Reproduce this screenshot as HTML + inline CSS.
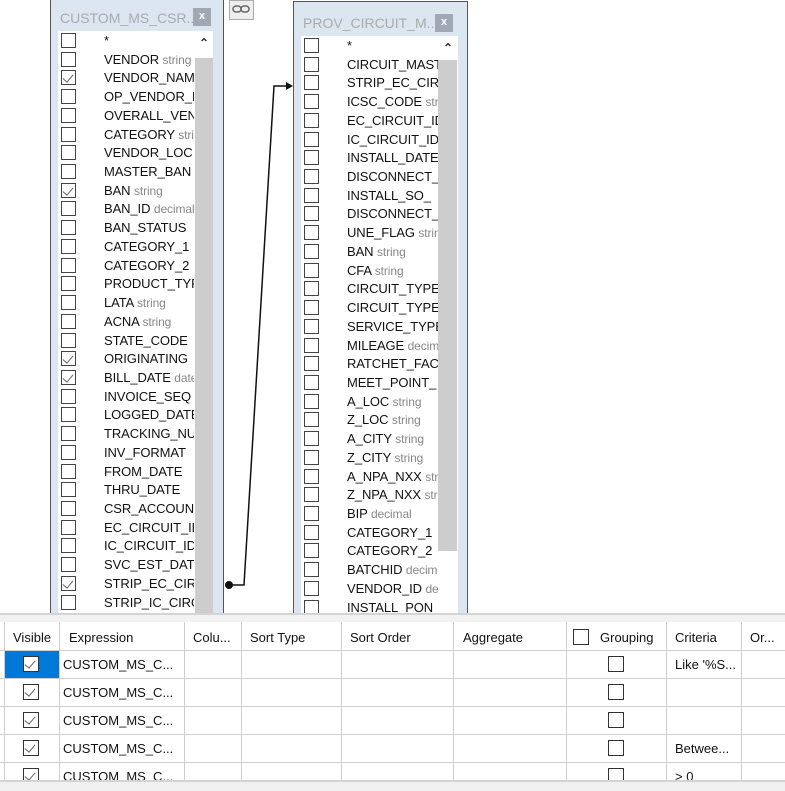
<!DOCTYPE html>
<html><head><style>
*{margin:0;padding:0;box-sizing:border-box}
body{width:785px;height:791px;overflow:hidden;background:#fff;font-family:"Liberation Sans",sans-serif;font-size:13px;color:#111;position:relative}
.panel{position:absolute;background:#dce6f1;border-left:1px solid #555;border-right:1px solid #555}
.title{position:absolute;color:#aaa;font-size:14px;white-space:nowrap}
.close{position:absolute;width:18px;height:18px;background:#9fa8b3;color:#fff;font-size:11px;font-weight:bold;text-align:center;line-height:17px}
.list{position:absolute;background:#fff;overflow:hidden}
.row{height:18.72px;position:relative;white-space:nowrap}
.cb{position:absolute;left:3px;top:2px;width:15px;height:15px;border:1px solid #444;background:#fff}
.ck::after{content:"";position:absolute;left:3px;top:1px;width:5px;height:9px;border-right:1.5px solid #666;border-bottom:1.5px solid #666;transform:rotate(40deg)}
.tx{position:absolute;left:46px;top:2px;letter-spacing:-0.1px}
.t{color:#888;font-size:12px}
.thumb{position:absolute;background:#cdcdcd}
.gl{position:absolute;background:#cfcfcf}
.h{position:absolute;top:630px;white-space:nowrap}
.c{position:absolute;white-space:nowrap}
.gcb{position:absolute;width:16px;height:16px;border:1px solid #333;background:#fff}
</style></head><body>

<div class="panel" style="left:50px;top:0;width:174px;height:614px"></div>
<div class="title" style="left:60px;top:10px">CUSTOM_MS_CSR...</div>
<div class="close" style="left:193px;top:8px">x</div>
<div class="list" style="left:58px;top:31px;width:155px;height:583px">
<div style="position:absolute;top:0;left:0;width:136px;height:583px;overflow:hidden">
<div class="row"><div class="cb"></div><div class="tx">*</div></div>
<div class="row"><div class="cb"></div><div class="tx">VENDOR <span class="t">string</span></div></div>
<div class="row"><div class="cb ck"></div><div class="tx">VENDOR_NAME</div></div>
<div class="row"><div class="cb"></div><div class="tx">OP_VENDOR_ID</div></div>
<div class="row"><div class="cb"></div><div class="tx">OVERALL_VENDOR</div></div>
<div class="row"><div class="cb"></div><div class="tx">CATEGORY <span class="t">string</span></div></div>
<div class="row"><div class="cb"></div><div class="tx">VENDOR_LOC</div></div>
<div class="row"><div class="cb"></div><div class="tx">MASTER_BAN</div></div>
<div class="row"><div class="cb ck"></div><div class="tx">BAN <span class="t">string</span></div></div>
<div class="row"><div class="cb"></div><div class="tx">BAN_ID <span class="t">decimal</span></div></div>
<div class="row"><div class="cb"></div><div class="tx">BAN_STATUS</div></div>
<div class="row"><div class="cb"></div><div class="tx">CATEGORY_1</div></div>
<div class="row"><div class="cb"></div><div class="tx">CATEGORY_2</div></div>
<div class="row"><div class="cb"></div><div class="tx">PRODUCT_TYPE</div></div>
<div class="row"><div class="cb"></div><div class="tx">LATA <span class="t">string</span></div></div>
<div class="row"><div class="cb"></div><div class="tx">ACNA <span class="t">string</span></div></div>
<div class="row"><div class="cb"></div><div class="tx">STATE_CODE</div></div>
<div class="row"><div class="cb ck"></div><div class="tx">ORIGINATING</div></div>
<div class="row"><div class="cb ck"></div><div class="tx">BILL_DATE <span class="t">date</span></div></div>
<div class="row"><div class="cb"></div><div class="tx">INVOICE_SEQ</div></div>
<div class="row"><div class="cb"></div><div class="tx">LOGGED_DATE</div></div>
<div class="row"><div class="cb"></div><div class="tx">TRACKING_NUM</div></div>
<div class="row"><div class="cb"></div><div class="tx">INV_FORMAT</div></div>
<div class="row"><div class="cb"></div><div class="tx">FROM_DATE</div></div>
<div class="row"><div class="cb"></div><div class="tx">THRU_DATE</div></div>
<div class="row"><div class="cb"></div><div class="tx">CSR_ACCOUNT</div></div>
<div class="row"><div class="cb"></div><div class="tx">EC_CIRCUIT_ID</div></div>
<div class="row"><div class="cb"></div><div class="tx">IC_CIRCUIT_ID</div></div>
<div class="row"><div class="cb"></div><div class="tx">SVC_EST_DATE</div></div>
<div class="row"><div class="cb ck"></div><div class="tx">STRIP_EC_CIRCUIT</div></div>
<div class="row"><div class="cb"></div><div class="tx">STRIP_IC_CIRCUIT</div></div>
</div>
<div class="thumb" style="left:137px;top:27px;width:18px;height:560px"></div>
<div style="position:absolute;left:141px;top:5px;font-size:12px;color:#333;font-weight:bold">&#8963;</div>
</div>

<div style="position:absolute;left:229px;top:0;width:25px;height:20px;border:1px solid #aaa;background:#eee"></div>
<svg style="position:absolute;left:231px;top:2px" width="20" height="14"><rect x="2" y="4" width="8" height="6" rx="3" fill="none" stroke="#666" stroke-width="1.5"/><rect x="10" y="4" width="8" height="6" rx="3" fill="none" stroke="#666" stroke-width="1.5"/></svg>

<div class="panel" style="left:293px;top:1px;width:175px;height:613px;border-top:1px solid #555"></div>
<div class="title" style="left:303px;top:15px">PROV_CIRCUIT_M...</div>
<div class="close" style="left:435px;top:14px">x</div>
<div class="list" style="left:301px;top:36px;width:157px;height:578px">
<div style="position:absolute;top:0;left:0;width:137px;height:578px;overflow:hidden">
<div class="row"><div class="cb"></div><div class="tx">*</div></div>
<div class="row"><div class="cb"></div><div class="tx">CIRCUIT_MASTER</div></div>
<div class="row"><div class="cb"></div><div class="tx">STRIP_EC_CIRCUIT</div></div>
<div class="row"><div class="cb"></div><div class="tx">ICSC_CODE <span class="t">string</span></div></div>
<div class="row"><div class="cb"></div><div class="tx">EC_CIRCUIT_ID</div></div>
<div class="row"><div class="cb"></div><div class="tx">IC_CIRCUIT_ID</div></div>
<div class="row"><div class="cb"></div><div class="tx">INSTALL_DATE</div></div>
<div class="row"><div class="cb"></div><div class="tx">DISCONNECT_</div></div>
<div class="row"><div class="cb"></div><div class="tx">INSTALL_SO_</div></div>
<div class="row"><div class="cb"></div><div class="tx">DISCONNECT_</div></div>
<div class="row"><div class="cb"></div><div class="tx">UNE_FLAG <span class="t">string</span></div></div>
<div class="row"><div class="cb"></div><div class="tx">BAN <span class="t">string</span></div></div>
<div class="row"><div class="cb"></div><div class="tx">CFA <span class="t">string</span></div></div>
<div class="row"><div class="cb"></div><div class="tx">CIRCUIT_TYPE</div></div>
<div class="row"><div class="cb"></div><div class="tx">CIRCUIT_TYPE</div></div>
<div class="row"><div class="cb"></div><div class="tx">SERVICE_TYPE</div></div>
<div class="row"><div class="cb"></div><div class="tx">MILEAGE <span class="t">decimal</span></div></div>
<div class="row"><div class="cb"></div><div class="tx">RATCHET_FAC</div></div>
<div class="row"><div class="cb"></div><div class="tx">MEET_POINT_</div></div>
<div class="row"><div class="cb"></div><div class="tx">A_LOC <span class="t">string</span></div></div>
<div class="row"><div class="cb"></div><div class="tx">Z_LOC <span class="t">string</span></div></div>
<div class="row"><div class="cb"></div><div class="tx">A_CITY <span class="t">string</span></div></div>
<div class="row"><div class="cb"></div><div class="tx">Z_CITY <span class="t">string</span></div></div>
<div class="row"><div class="cb"></div><div class="tx">A_NPA_NXX <span class="t">string</span></div></div>
<div class="row"><div class="cb"></div><div class="tx">Z_NPA_NXX <span class="t">string</span></div></div>
<div class="row"><div class="cb"></div><div class="tx">BIP <span class="t">decimal</span></div></div>
<div class="row"><div class="cb"></div><div class="tx">CATEGORY_1</div></div>
<div class="row"><div class="cb"></div><div class="tx">CATEGORY_2</div></div>
<div class="row"><div class="cb"></div><div class="tx">BATCHID <span class="t">decimal</span></div></div>
<div class="row"><div class="cb"></div><div class="tx">VENDOR_ID <span class="t">decimal</span></div></div>
<div class="row"><div class="cb"></div><div class="tx">INSTALL_PON</div></div>
</div>
<div class="thumb" style="left:137px;top:24px;width:19px;height:491px"></div>
<div style="position:absolute;left:142px;top:5px;font-size:12px;color:#333;font-weight:bold">&#8963;</div>
</div>

<svg style="position:absolute;left:0;top:0" width="300" height="620">
<polyline points="229,585 244,585 274,86 290,86" fill="none" stroke="#111" stroke-width="1.5"/>
<circle cx="229" cy="585" r="4" fill="#111"/>
<polygon points="293,86 286,82 286,90" fill="#111"/>
</svg>

<div style="position:absolute;left:0;top:613px;width:785px;height:9px;background:#f2f2f2;border-top:2px solid #d4d4d4"></div>

<div style="position:absolute;left:0;top:622px;width:785px;height:158px;background:#fff"></div>
<div class="gl" style="left:0;top:650px;width:785px;height:1px"></div>
<div class="gl" style="left:0;top:678px;width:785px;height:1px"></div>
<div class="gl" style="left:0;top:706px;width:785px;height:1px"></div>
<div class="gl" style="left:0;top:734px;width:785px;height:1px"></div>
<div class="gl" style="left:0;top:762px;width:785px;height:1px"></div>
<div class="gl" style="left:4px;top:622px;width:1px;height:158px"></div>
<div class="gl" style="left:59px;top:622px;width:1px;height:158px"></div>
<div class="gl" style="left:184px;top:622px;width:1px;height:158px"></div>
<div class="gl" style="left:241px;top:622px;width:1px;height:158px"></div>
<div class="gl" style="left:341px;top:622px;width:1px;height:158px"></div>
<div class="gl" style="left:453px;top:622px;width:1px;height:158px"></div>
<div class="gl" style="left:566px;top:622px;width:1px;height:158px"></div>
<div class="gl" style="left:666px;top:622px;width:1px;height:158px"></div>
<div class="gl" style="left:741px;top:622px;width:1px;height:158px"></div>

<div class="h" style="left:13px">Visible</div>
<div class="h" style="left:69px">Expression</div>
<div class="h" style="left:193px">Colu...</div>
<div class="h" style="left:250px">Sort Type</div>
<div class="h" style="left:350px">Sort Order</div>
<div class="h" style="left:463px">Aggregate</div>
<div class="gcb" style="left:573px;top:629px"></div>
<div class="h" style="left:600px">Grouping</div>
<div class="h" style="left:675px">Criteria</div>
<div class="h" style="left:750px">Or...</div>

<div style="position:absolute;left:5px;top:651px;width:54px;height:27px;background:#0078d7"></div>
<div class="gcb ck" style="left:23px;top:656px"></div>
<div class="gcb ck" style="left:23px;top:684px"></div>
<div class="gcb ck" style="left:23px;top:712px"></div>
<div class="gcb ck" style="left:23px;top:740px"></div>
<div class="gcb ck" style="left:23px;top:768px"></div>
<div class="c" style="left:63px;top:657px">CUSTOM_MS_C...</div>
<div class="c" style="left:63px;top:685px">CUSTOM_MS_C...</div>
<div class="c" style="left:63px;top:713px">CUSTOM_MS_C...</div>
<div class="c" style="left:63px;top:741px">CUSTOM_MS_C...</div>
<div class="c" style="left:63px;top:769px">CUSTOM_MS_C...</div>
<div class="gcb" style="left:608px;top:656px"></div>
<div class="gcb" style="left:608px;top:684px"></div>
<div class="gcb" style="left:608px;top:712px"></div>
<div class="gcb" style="left:608px;top:740px"></div>
<div class="gcb" style="left:608px;top:768px"></div>
<div class="c" style="left:675px;top:657px">Like '%S...</div>
<div class="c" style="left:675px;top:741px">Betwee...</div>
<div class="c" style="left:675px;top:769px">&gt; 0</div>

<div style="position:absolute;left:0;top:780px;width:785px;height:11px;background:#f0f0f0;border-top:2px solid #d4d4d4"></div>
</body></html>
